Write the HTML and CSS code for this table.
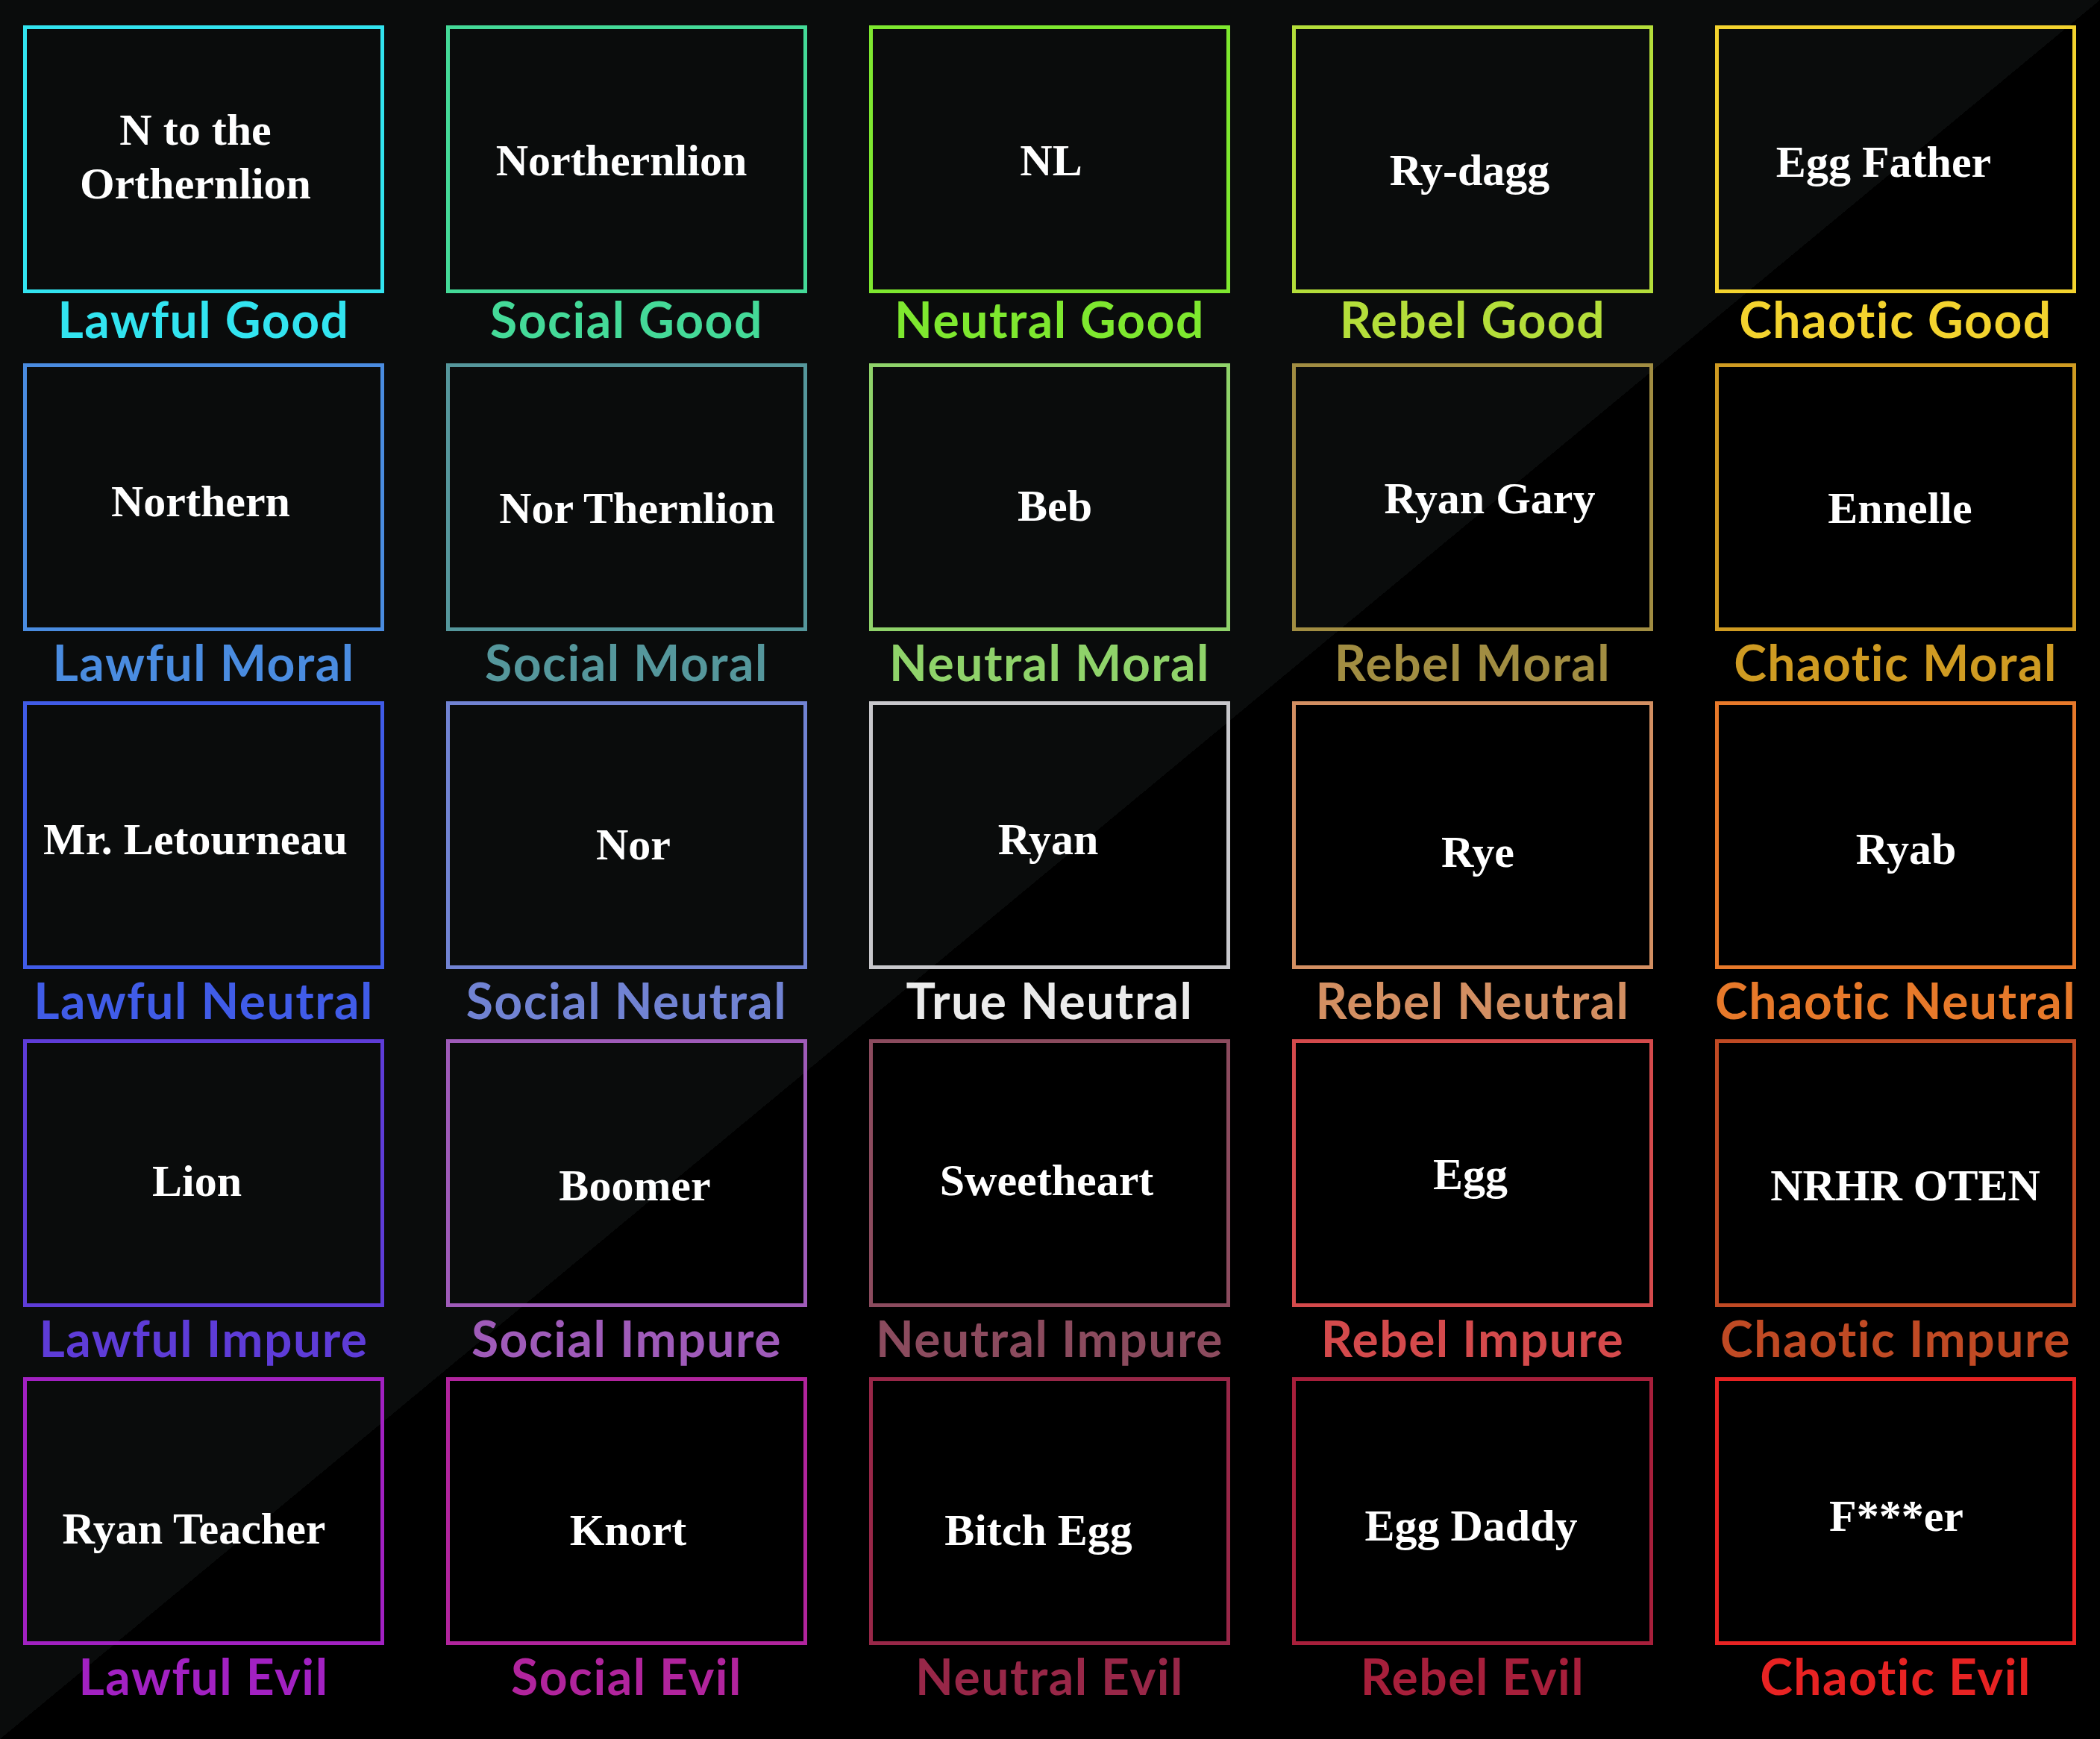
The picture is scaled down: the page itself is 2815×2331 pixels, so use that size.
FILE: index.html
```html
<!DOCTYPE html>
<html lang="en">
<head>
<meta charset="utf-8">
<title>Alignment Chart</title>
<link rel="stylesheet" href="styles.css">
</head>
<body>
<main class="chart">
  <div class="cell c-lg"><div class="box"><span class="name o11">N to the<br>Orthernlion</span></div><div class="label">Lawful Good</div></div>
  <div class="cell c-sg"><div class="box"><span class="name o12">Northernlion</span></div><div class="label">Social Good</div></div>
  <div class="cell c-ng"><div class="box"><span class="name o13">NL</span></div><div class="label">Neutral Good</div></div>
  <div class="cell c-rg"><div class="box"><span class="name o14">Ry-dagg</span></div><div class="label">Rebel Good</div></div>
  <div class="cell c-cg"><div class="box"><span class="name o15">Egg Father</span></div><div class="label">Chaotic Good</div></div>

  <div class="cell c-lm"><div class="box"><span class="name o21">Northern</span></div><div class="label">Lawful Moral</div></div>
  <div class="cell c-sm"><div class="box"><span class="name o22">Nor Thernlion</span></div><div class="label">Social Moral</div></div>
  <div class="cell c-nm"><div class="box"><span class="name o23">Beb</span></div><div class="label">Neutral Moral</div></div>
  <div class="cell c-rm"><div class="box"><span class="name o24">Ryan Gary</span></div><div class="label">Rebel Moral</div></div>
  <div class="cell c-cm"><div class="box"><span class="name o25">Ennelle</span></div><div class="label">Chaotic Moral</div></div>

  <div class="cell c-ln"><div class="box"><span class="name o31">Mr. Letourneau</span></div><div class="label">Lawful Neutral</div></div>
  <div class="cell c-sn"><div class="box"><span class="name o32">Nor</span></div><div class="label">Social Neutral</div></div>
  <div class="cell c-tn"><div class="box"><span class="name o33">Ryan</span></div><div class="label">True Neutral</div></div>
  <div class="cell c-rn"><div class="box"><span class="name o34">Rye</span></div><div class="label">Rebel Neutral</div></div>
  <div class="cell c-cn"><div class="box"><span class="name o35">Ryab</span></div><div class="label">Chaotic Neutral</div></div>

  <div class="cell c-li"><div class="box"><span class="name o41">Lion</span></div><div class="label">Lawful Impure</div></div>
  <div class="cell c-si"><div class="box"><span class="name o42">Boomer</span></div><div class="label">Social Impure</div></div>
  <div class="cell c-ni"><div class="box"><span class="name o43">Sweetheart</span></div><div class="label">Neutral Impure</div></div>
  <div class="cell c-ri"><div class="box"><span class="name o44">Egg</span></div><div class="label">Rebel Impure</div></div>
  <div class="cell c-ci"><div class="box"><span class="name o45">NRHR OTEN</span></div><div class="label">Chaotic Impure</div></div>

  <div class="cell c-le"><div class="box"><span class="name o51">Ryan Teacher</span></div><div class="label">Lawful Evil</div></div>
  <div class="cell c-se"><div class="box"><span class="name o52">Knort</span></div><div class="label">Social Evil</div></div>
  <div class="cell c-ne"><div class="box"><span class="name o53">Bitch Egg</span></div><div class="label">Neutral Evil</div></div>
  <div class="cell c-re"><div class="box"><span class="name o54">Egg Daddy</span></div><div class="label">Rebel Evil</div></div>
  <div class="cell c-ce"><div class="box"><span class="name o55">F***er</span></div><div class="label">Chaotic Evil</div></div>
</main>
</body>
</html>
```
FILE: styles.css
```css
html, body {
  margin: 0;
  padding: 0;
  background: #000;
}

.chart {
  box-sizing: border-box;
  width: 2815px;
  height: 2331px;
  padding: 34px 32px 32px 31px;
  display: grid;
  grid-template-columns: repeat(5, 484px);
  grid-auto-rows: 453px;
  column-gap: 83px;
  background: linear-gradient(to bottom right, #0a0c0c 50%, #000 50%);
}

.cell {
  display: flex;
  flex-direction: column;
  color: var(--c);
}

.box {
  box-sizing: border-box;
  height: 359px;
  border: 5px solid var(--b, var(--c));
  display: flex;
  align-items: center;
  justify-content: center;
}

.name {
  font-family: "Liberation Serif", "Times New Roman", serif;
  font-weight: bold;
  font-size: 60px;
  line-height: 72px;
  color: #fff;
  text-align: center;
  white-space: nowrap;
}

.label {
  box-sizing: border-box;
  height: 94px;
  padding-top: 2px;
  font-family: "Lato", "Noto Sans", sans-serif;
  font-weight: 700;
  font-size: 66px;
  line-height: 66px;
  letter-spacing: 1.5px;
  text-align: center;
  white-space: nowrap;
}

/* rows 2-5 sit a little lower under their boxes */
.cell:nth-child(n+6) .label {
  padding-top: 9px;
}

/* colours */
.c-lg { --c: #32e4f0; }
.c-sg { --c: #44da98; }
.c-ng { --c: #7ee82f; }
.c-rg { --c: #b4de3a; }
.c-cg { --c: #f3d32e; }

.c-lm { --c: #4a8ce0; }
.c-sm { --c: #55979c; }
.c-nm { --c: #8fd36a; }
.c-rm { --c: #a18d42; }
.c-cm { --c: #cf9b22; }

.c-ln { --c: #405ce8; }
.c-sn { --c: #7183d3; }
.c-tn { --c: #ebebeb; --b: #c8c8cc; }
.c-rn { --c: #d38f62; }
.c-cn { --c: #e7792a; }

.c-li { --c: #5e3cd8; }
.c-si { --c: #9f5bb9; }
.c-ni { --c: #8b4b5e; }
.c-ri { --c: #d44a4c; }
.c-ci { --c: #c04a24; }

.c-le { --c: #a221c2; }
.c-se { --c: #b1249d; }
.c-ne { --c: #982748; }
.c-re { --c: #a71f3b; }
.c-ce { --c: #e82323; }

/* hand-placed text nudges inside each box */
.o11 { transform: translate(-11px, -4px); }
.o12 { transform: translate(-7px, 1px); }
.o13 { transform: translate(2px, 1px); }
.o14 { transform: translate(-4px, 14px); }
.o15 { transform: translate(-16px, 3px); }

.o21 { transform: translate(-4px, 5px); }
.o22 { transform: translate(14px, 14px); }
.o23 { transform: translate(7px, 11px); }
.o24 { transform: translate(23px, 1px); }
.o25 { transform: translate(6px, 14px); }

.o31 { transform: translate(-11px, 5px); }
.o32 { transform: translate(9px, 12px); }
.o33 { transform: translate(-2px, 5px); }
.o34 { transform: translate(7px, 22px); }
.o35 { transform: translate(14px, 18px); }

.o41 { transform: translate(-9px, 10px); }
.o42 { transform: translate(11px, 16px); }
.o43 { transform: translate(-4px, 9px); }
.o44 { transform: translate(-3px, 1px); }
.o45 { transform: translate(13px, 16px); }

.o51 { transform: translate(-13px, 23px); }
.o52 { transform: translate(2px, 25px); }
.o53 { transform: translate(-15px, 25px); }
.o54 { transform: translate(-2px, 19px); }
.o55 { transform: translate(1px, 6px); }
```
